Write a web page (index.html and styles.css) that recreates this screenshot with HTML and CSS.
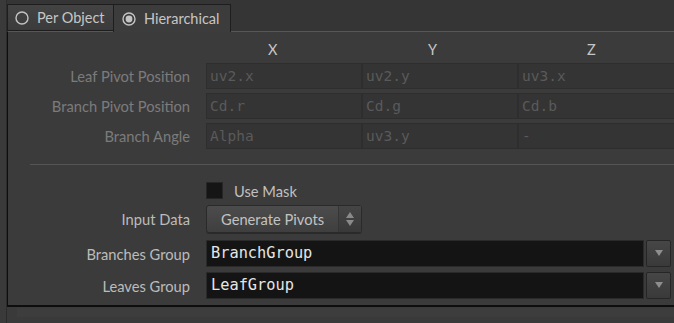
FILE: index.html
```html
<!DOCTYPE html>
<html>
<head>
<meta charset="utf-8">
<link rel="stylesheet" href="styles.css">
</head>
<body>
<div class="frame">
  <div class="gutter"></div>
  <div class="main">
    <div class="tabs">
      <div class="tab">
        <svg class="radio" width="14" height="14" viewBox="0 0 14 14"><circle cx="7" cy="7" r="6" fill="none" stroke="#c4c4c4" stroke-width="1.4"/></svg>
        <span>Per Object</span>
      </div>
      <div class="tab active">
        <svg class="radio" width="14" height="14" viewBox="0 0 14 14"><circle cx="7" cy="7" r="6" fill="none" stroke="#c4c4c4" stroke-width="1.4"/><circle cx="7" cy="7" r="3.4" fill="#c4c4c4"/></svg>
        <span>Hierarchical</span>
      </div>
    </div>
    <div class="panel">
      <div class="grid">
        <div></div>
        <div class="head hx">X</div>
        <div class="head hy">Y</div>
        <div class="head hz">Z</div>

        <div class="label dim">Leaf Pivot Position</div>
        <div class="field">uv2.x</div>
        <div class="field">uv2.y</div>
        <div class="field">uv3.x</div>

        <div class="label dim">Branch Pivot Position</div>
        <div class="field">Cd.r</div>
        <div class="field">Cd.g</div>
        <div class="field">Cd.b</div>

        <div class="label dim">Branch Angle</div>
        <div class="field">Alpha</div>
        <div class="field">uv3.y</div>
        <div class="field">-</div>
      </div>
      <div class="sep"></div>
      <div class="rows">
        <div class="row check-row">
          <div class="label"></div>
          <div class="checkbox"></div>
          <span class="check-label">Use Mask</span>
        </div>
        <div class="row menu-row">
          <div class="label">Input Data</div>
          <div class="menu">
            <span class="menu-text">Generate Pivots</span>
            <span class="menu-arrows">
              <svg width="10" height="16" viewBox="0 0 10 16"><path d="M5 1 L9 7 L1 7 Z" fill="#8a8a8a"/><path d="M5 15 L9 9 L1 9 Z" fill="#8a8a8a"/></svg>
            </span>
          </div>
        </div>
        <div class="row str-row">
          <div class="label">Branches Group</div>
          <div class="strfield">BranchGroup</div>
          <div class="drop"><svg width="10" height="8" viewBox="0 0 10 8"><path d="M1 1 L9 1 L5 7 Z" fill="#8e8e8e"/></svg></div>
        </div>
        <div class="row str-row">
          <div class="label">Leaves Group</div>
          <div class="strfield">LeafGroup</div>
          <div class="drop"><svg width="10" height="8" viewBox="0 0 10 8"><path d="M1 1 L9 1 L5 7 Z" fill="#8e8e8e"/></svg></div>
        </div>
      </div>
    </div>
    <div class="footer"><div class="footer-band"></div></div>
  </div>
</div>
</body>
</html>
```

FILE: styles.css
```css
html, body {
  margin: 0;
  padding: 0;
  background: #353535;
  overflow: hidden;
  width: 674px;
  height: 323px;
}
body {
  font-family: Lato, "Noto Sans", sans-serif;
  font-size: 14.7px;
  color: #bcbcbc;
}
.frame {
  display: flex;
  height: 323px;
}
.gutter {
  width: 6px;
  flex: none;
  background: #3a3a3a;
  border-right: 1px solid #2c2c2c;
}
.main {
  width: 700px;
  flex: none;
  display: flex;
  flex-direction: column;
}
.tabs {
  height: 27px;
  padding-top: 4px;
  display: flex;
  align-items: flex-end;
  background: #353535;
}
.tab {
  box-sizing: border-box;
  height: 27px;
  display: flex;
  align-items: center;
  gap: 8px;
  padding-left: 7px;
  color: #c6c6c6;
  font-size: 14.5px;
  border: 1px solid #1e1e1e;
  border-bottom: none;
  background: linear-gradient(#434343, #3b3b3b);
}
.tab:first-child {
  width: 106px;
  border-bottom: 1px solid #1e1e1e;
  border-right: none;
}
.tab.active {
  width: 118px;
  height: 28px;
  margin-bottom: -1px;
  background: #3c3c3c;
  position: relative;
  z-index: 1;
  padding-left: 8px;
}
.radio { flex: none; }
.panel {
  box-sizing: border-box;
  height: 276px;
  background: #3b3b3b;
  border-top: 1px solid #575757;
  border-left: 1px solid #0e0e0e;
  border-bottom: 2px solid #0e0e0e;
}
.grid {
  display: grid;
  grid-template-columns: 198px 156px 156px 170px;
  grid-template-rows: 27px 26px 26px 26px;
  row-gap: 4px;
}
.head {
  color: #c6c6c6;
  font-size: 14.5px;
  line-height: 36px;
  height: 27px;
}
.hx { padding-left: 62px; }
.hy { padding-left: 66px; }
.hz { padding-left: 69px; }
.label {
  text-align: right;
  padding-right: 16px;
  line-height: 26px;
  white-space: nowrap;
}
.label.dim {
  color: #7b7b7b;
}
.field {
  box-sizing: border-box;
  background: #343434;
  border: 1px solid #2e2e2e;
  font-family: "DejaVu Sans Mono", monospace;
  font-size: 14.5px;
  color: #5a5a5a;
  line-height: 24px;
  padding-left: 3px;
}
.sep {
  margin: 15px 0 0 22px;
  height: 1px;
  background: #555555;
}
.rows {
  display: flex;
  flex-direction: column;
  padding-top: 17px;
}
.row {
  display: flex;
  align-items: center;
}
.row .label {
  width: 198px;
  box-sizing: border-box;
  flex: none;
}
.check-row {
  height: 17px;
}
.checkbox {
  width: 17px;
  height: 17px;
  box-sizing: border-box;
  background: #151515;
  border: 1px solid #262626;
}
.check-label {
  margin-left: 11px;
  color: #c0c0c0;
}
.menu-row {
  margin-top: 6px;
  height: 28px;
}
.menu {
  box-sizing: border-box;
  width: 156px;
  height: 28px;
  display: flex;
  border: 1px solid #2a2a2a;
  border-radius: 3px;
  background: linear-gradient(#4c4c4c, #3f3f3f);
  box-shadow: 0 1px 0 #2a2a2a;
}
.menu-text {
  flex: 1;
  text-align: center;
  line-height: 26px;
  color: #c2c2c2;
}
.menu-arrows {
  width: 22px;
  border-left: 1px solid #353535;
  background: linear-gradient(#454545, #393939);
  display: flex;
  align-items: center;
  justify-content: center;
}
.str-row {
  height: 27px;
  margin-top: 7px;
}
.str-row + .str-row {
  margin-top: 5px;
}
.strfield {
  box-sizing: border-box;
  width: 438px;
  height: 27px;
  background: #141414;
  border: 1px solid #2a2a2a;
  font-family: "DejaVu Sans Mono", monospace;
  font-size: 15.3px;
  color: #e6e6e6;
  line-height: 25px;
  padding-left: 4px;
}
.drop {
  box-sizing: border-box;
  width: 25px;
  height: 27px;
  margin-left: 2px;
  margin-top: -1px;
  border: 1px solid #262626;
  border-radius: 2px;
  background: linear-gradient(#464646, #3a3a3a);
  display: flex;
  align-items: center;
  justify-content: center;
}
.footer {
  flex: 1;
  background: #3a3a3a;
  padding: 1px 0 0 10px;
}
.footer-band {
  height: 9px;
  background: #3d3d3d;
}
```
